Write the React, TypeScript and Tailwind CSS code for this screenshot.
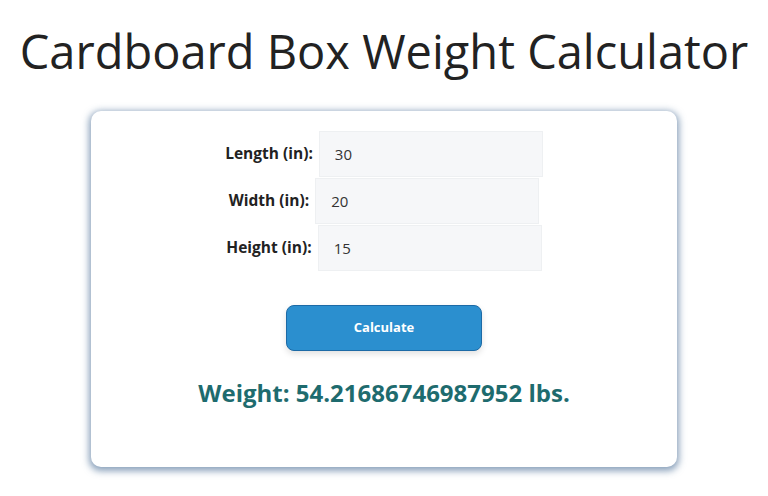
import { useState } from 'react';

const fields = [
    { key: 'length', label: 'Length (in):' },
    { key: 'width', label: 'Width (in):' },
    { key: 'height', label: 'Height (in):' },
];

export default function App() {
    const [dims, setDims] = useState<Record<string, string>>({ length: '30', width: '20', height: '15' });
    const [weight] = useState('54.21686746987952');

    return (
        <div className="min-h-[496px] bg-white font-['Open_Sans',sans-serif] text-[#222]">
            <h1 className="pt-[20px] text-center text-[47px] leading-[62px] font-normal text-[#222]">
                Cardboard Box Weight Calculator
            </h1>

            <div className="mx-auto mt-[29px] w-[586px] h-[356px] rounded-[10px] bg-white pt-[20px] shadow-[0_2px_7px_2px_rgba(75,110,150,0.65)]">
                <div className="flex flex-col items-center">
                    {fields.map(f => (
                        <div key={f.key} className="flex items-center gap-[6px] mb-px">
                            <label className="text-[15.5px] font-bold text-[#222]">{f.label}</label>
                            <input
                                value={dims[f.key]}
                                onChange={e => setDims({ ...dims, [f.key]: e.target.value })}
                                className="w-[224px] h-[46px] bg-[#f6f7f9] border border-[#eef0f2] px-[15px] text-[15px] text-[#333] outline-none"
                            />
                        </div>
                    ))}
                </div>

                <div className="flex justify-center mt-[33px]">
                    <button className="w-[196px] h-[46px] rounded-[8px] bg-[#2b8fcf] border-[1.5px] border-[#1c6aa6] text-white text-[13px] font-bold shadow-[0_3px_6px_rgba(0,0,0,0.12)]">
                        Calculate
                    </button>
                </div>

                <p className="mt-[24px] text-center text-[24px] font-bold text-[#1e6b6e]">
                    Weight: {weight} lbs.
                </p>
            </div>
        </div>
    );
}
